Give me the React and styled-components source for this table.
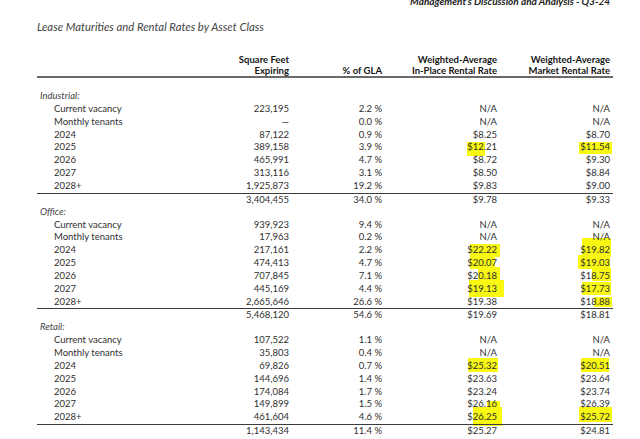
import React from 'react';
import styled, { createGlobalStyle } from 'styled-components';

const Global = createGlobalStyle`
  html, body { margin: 0; padding: 0; background: #fff; }
  body { font-family: Lato, "Noto Sans", sans-serif; color: #2f2f2f; }
`;

const ROW_H = 12.85;
const COLS = '192px 60px 93px 115px 113px';

const Page = styled.div`
  width: 640px;
  height: 439px;
  overflow: hidden;
  padding: 0 27px 0 37px;
  box-sizing: border-box;
`;

const Banner = styled.div`
  margin-top: -5.5px;
  height: 12px;
  line-height: 12px;
  font-size: 10px;
  font-weight: 700;
  font-style: italic;
  color: #222;
  text-align: right;
  padding-right: 3px;
`;

const Title = styled.div`
  margin-top: 13.5px;
  line-height: 14px;
  font-size: 11.3px;
  font-style: italic;
  color: #444;
`;

const Table = styled.div`
  isolation: isolate;
  width: 576px;
`;

const HeadRow = styled.div`
  margin-top: 19.5px;
  display: grid;
  grid-template-columns: ${COLS};
  padding-bottom: 0.3px;
  border-bottom: 2.5px solid #6a6a6a;
`;

const HeadCell = styled.div`
  text-align: right;
  font-size: 9.5px;
  font-weight: 700;
  line-height: 11px;
  color: #151515;
  white-space: nowrap;
  align-self: end;
`;

const Body = styled.div`
  margin-top: 12.3px;
`;

const Row = styled.div`
  display: grid;
  grid-template-columns: ${COLS};
  height: ${ROW_H}px;
  box-sizing: border-box;
  line-height: ${(p) => (p.$total ? ROW_H - 1.5 : ROW_H)}px;
  border-top: ${(p) => (p.$total ? '1.5px solid #3c3c3c' : 'none')};
  font-size: 9.5px;
  white-space: nowrap;
`;

const Label = styled.div`
  padding-left: ${(p) => (p.$cat ? 3 : 17)}px;
  font-style: ${(p) => (p.$cat ? 'italic' : 'normal')};
  color: ${(p) => (p.$cat ? '#444' : '#2f2f2f')};
`;

const Cell = styled.div`
  text-align: right;
`;

const Num = styled.span`
  display: inline-block;
  position: relative;
  ${(p) =>
    p.$hl
      ? `&::before {
    content: '';
    position: absolute;
    right: ${p.$hl[0]}px;
    width: ${p.$hl[1]}px;
    top: ${p.$hl[2]}px;
    height: ${p.$hl[3]}px;
    background: #f8f812;
    z-index: -1;
  }`
      : ''}
`;

const sections = [
  {
    name: 'Industrial:',
    rows: [
      ['Current vacancy', '223,195', '2.2 %', 'N/A', 'N/A'],
      ['Monthly tenants', '—', '0.0 %', 'N/A', 'N/A'],
      ['2024', '87,122', '0.9 %', '$8.25', '$8.70'],
      ['2025', '389,158', '3.9 %', '$12.21', '$11.54'],
      ['2026', '465,991', '4.7 %', '$8.72', '$9.30'],
      ['2027', '313,116', '3.1 %', '$8.50', '$8.84'],
      ['2028+', '1,925,873', '19.2 %', '$9.83', '$9.00'],
    ],
    total: ['3,404,455', '34.0 %', '$9.78', '$9.33'],
  },
  {
    name: 'Office:',
    rows: [
      ['Current vacancy', '939,923', '9.4 %', 'N/A', 'N/A'],
      ['Monthly tenants', '17,963', '0.2 %', 'N/A', 'N/A'],
      ['2024', '217,161', '2.2 %', '$22.22', '$19.82'],
      ['2025', '474,413', '4.7 %', '$20.07', '$19.03'],
      ['2026', '707,845', '7.1 %', '$20.18', '$18.75'],
      ['2027', '445,169', '4.4 %', '$19.13', '$17.73'],
      ['2028+', '2,665,646', '26.6 %', '$19.38', '$18.88'],
    ],
    total: ['5,468,120', '54.6 %', '$19.69', '$18.81'],
  },
  {
    name: 'Retail:',
    rows: [
      ['Current vacancy', '107,522', '1.1 %', 'N/A', 'N/A'],
      ['Monthly tenants', '35,803', '0.4 %', 'N/A', 'N/A'],
      ['2024', '69,826', '0.7 %', '$25.32', '$20.51'],
      ['2025', '144,696', '1.4 %', '$23.63', '$23.64'],
      ['2026', '174,084', '1.7 %', '$23.24', '$23.74'],
      ['2027', '149,899', '1.5 %', '$26.16', '$26.39'],
      ['2028+', '461,604', '4.6 %', '$26.25', '$25.72'],
    ],
    total: ['1,143,434', '11.4 %', '$25.27', '$24.81'],
  },
];

// highlights: key "section-row-col" -> [right, width, top, height] relative to the value box
const HL = {
  '0-3-3': [12, 18, 1, 14],
  '0-3-4': [-2, 33, 1, 12],
  '1-1-4': [-1, 29, 7, 6],
  '1-2-3': [-3, 30, 0, 13],
  '1-2-4': [-1, 29, 0, 13],
  '1-3-3': [2, 25, 0, 12],
  '1-3-4': [0, 32, -2, 14],
  '1-4-3': [-3, 22, -3, 13],
  '1-4-4': [-1, 19, -2, 13],
  '1-5-3': [-7, 35, -3, 17],
  '1-5-4': [-1, 29, -1, 13],
  '1-6-4': [-2, 18, 1, 10],
  '2-2-3': [-1, 30, -2, 14],
  '2-2-4': [1, 28, -2, 14],
  '2-5-3': [-3, 13, 3, 8],
  '2-6-3': [-5, 29, -4, 19],
  '2-6-4': [-2, 33, -4, 15],
};

export default function App() {
  return (
    <Page>
      <Global />
      <Banner>Management’s Discussion and Analysis - Q3-24</Banner>
      <Title>Lease Maturities and Rental Rates by Asset Class</Title>
      <Table>
        <HeadRow>
          <div />
          <HeadCell>
            Square Feet
            <br />
            Expiring
          </HeadCell>
          <HeadCell>% of GLA</HeadCell>
          <HeadCell>
            Weighted-Average
            <br />
            In-Place Rental Rate
          </HeadCell>
          <HeadCell>
            Weighted-Average
            <br />
            Market Rental Rate
          </HeadCell>
        </HeadRow>
        <Body>
          {sections.map((s, si) => (
            <React.Fragment key={s.name}>
              <Row>
                <Label $cat>{s.name}</Label>
              </Row>
              {s.rows.map((r, ri) => (
                <Row key={r[0]}>
                  <Label>{r[0]}</Label>
                  {r.slice(1).map((v, ci) => (
                    <Cell key={ci}>
                      <Num $hl={HL[`${si}-${ri}-${ci + 1}`]}>{v}</Num>
                    </Cell>
                  ))}
                </Row>
              ))}
              <Row $total>
                <Label />
                {s.total.map((v, ci) => (
                  <Cell key={ci}>
                    <Num>{v}</Num>
                  </Cell>
                ))}
              </Row>
            </React.Fragment>
          ))}
        </Body>
      </Table>
    </Page>
  );
}
